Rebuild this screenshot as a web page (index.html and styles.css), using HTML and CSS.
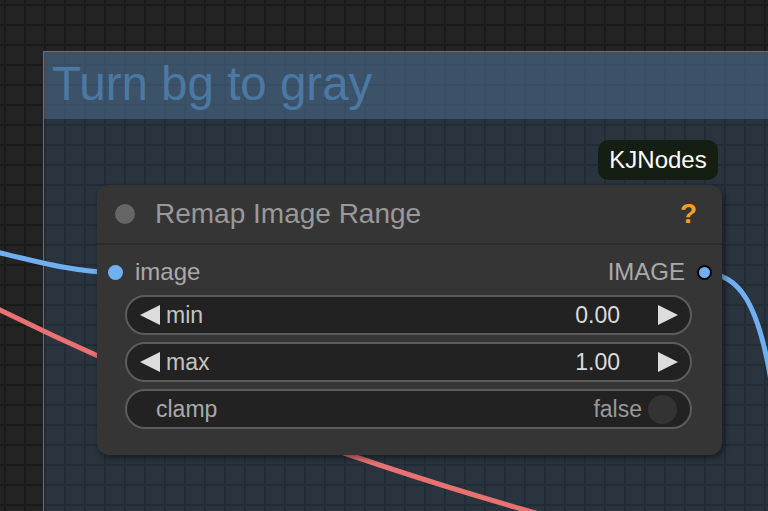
FILE: index.html
```html
<!DOCTYPE html>
<html lang="en">
<head>
  <meta charset="UTF-8">
  <meta name="viewport" content="width=device-width, initial-scale=1.0">
  <title>Remap Image Range</title>
  <link rel="stylesheet" href="styles.css">
</head>
<body>
  <div class="canvas">
    <section class="group">
      <header class="group-title">Turn bg to gray</header>
    </section>

    <svg class="links" width="768" height="511" viewBox="0 0 768 511">
      <path class="link blue" d="M -40 244 C 20 256, 60 271, 116 273" />
      <path class="link red" d="M -30 295 C 110 366, 300 450, 590 528" />
      <path class="link blue" d="M 704 273 C 738 273, 760 300, 774 400" />
    </svg>

    <div class="badge">KJNodes</div>

    <div class="node">
      <div class="node-title">
        <span class="node-dot"></span>
        <span class="node-name">Remap Image Range</span>
        <span class="node-help">?</span>
      </div>
      <div class="node-body">
        <div class="slots">
          <div class="slot"><i class="slot-dot"></i>image</div>
          <div class="slot slot-out">IMAGE<i class="slot-dot"></i></div>
        </div>
        <div class="widget">
          <span class="arrow arrow-left"></span>
          <span class="widget-label">min</span>
          <span class="widget-value">0.00</span>
          <span class="arrow arrow-right"></span>
        </div>
        <div class="widget">
          <span class="arrow arrow-left"></span>
          <span class="widget-label">max</span>
          <span class="widget-value">1.00</span>
          <span class="arrow arrow-right"></span>
        </div>
        <div class="widget widget-toggle">
          <span class="widget-label">clamp</span>
          <span class="widget-value">false</span>
          <span class="knob"></span>
        </div>
      </div>
    </div>
  </div>
</body>
</html>
```

FILE: styles.css
```css
html, body { margin: 0; height: 100%; overflow: hidden; }
body { background: #232323; font-family: "Liberation Sans", Arial, sans-serif; }

/* graph canvas with grid */
.canvas {
  position: relative; width: 768px; height: 511px; overflow: hidden;
  background-color: #232323;
  background-image:
    linear-gradient(to right, #1a1a1a 2px, transparent 2px),
    linear-gradient(to bottom, #1a1a1a 2px, transparent 2px);
  background-size: 20px 20px;
  background-position: 4px 4px;
}

/* group box */
.group {
  position: absolute; left: 43px; top: 51px; width: 760px; height: 500px;
  background: rgba(65,120,170,0.2);
  border-left: 1px solid #4f7699; border-top: 1px solid #4f7699;
}
.group-title {
  height: 67px; padding-left: 8px; box-sizing: border-box;
  background: rgba(81,119,158,0.45);
  color: #4b79a3; font-size: 47.5px; line-height: 64px;
}

/* links */
.links { position: absolute; left: 0; top: 0; }
.link { fill: none; stroke-width: 5; stroke-linecap: round; }
.link.blue { stroke: #70aff0; }
.link.red { stroke: #e87272; }

/* source badge */
.badge {
  position: absolute; left: 598px; top: 140px; width: 120px; height: 40px;
  display: flex; align-items: center; justify-content: center;
  background: #141e13; border-radius: 10px;
  color: #fff; font-size: 24px;
}

/* node */
.node {
  position: absolute; left: 97px; top: 185px; width: 625px; height: 270px;
  background: #353535; border-radius: 12px;
  box-shadow: 2px 3px 6px rgba(0,0,0,0.45);
  display: flex; flex-direction: column;
}
.node-title {
  height: 58px; display: flex; align-items: center;
  padding: 0 25px 0 18px;
  border-bottom: 2px solid #2b2b2b;
}
.node-dot { width: 20px; height: 20px; border-radius: 50%; background: #666; }
.node-name { margin-left: 20px; flex: 1; color: #999; font-size: 28px; }
.node-help { color: #f0a030; font-size: 28px; font-weight: bold; }

.node-body { display: flex; flex-direction: column; gap: 7px; padding-bottom: 25px; }
.slots {
  height: 50px; display: flex; align-items: center; justify-content: space-between;
  padding: 4px 10px 0 11px; box-sizing: border-box; margin-bottom: -7px;
  color: #aaa; font-size: 24px;
}
.slot { display: flex; align-items: center; gap: 12px; }
.slot-dot { width: 15px; height: 15px; border-radius: 50%; background: #70aff0; box-sizing: border-box; }
.slot-out .slot-dot { border: 2px solid #000; }

/* widgets */
.widget {
  height: 40px; margin: 0 30px 0 28px; box-sizing: border-box;
  display: flex; align-items: center;
  padding: 0 12px 0 13px;
  background: #222; border: 2px solid #5c5c5c; border-radius: 20px;
  font-size: 23px;
}
.widget-label { margin-left: 6px; flex: 1; color: #c4c4c4; }
.widget-value { color: #dcdcdc; margin-right: 38px; }
.arrow { width: 0; height: 0; border-top: 10px solid transparent; border-bottom: 10px solid transparent; }
.arrow-left { border-right: 20px solid #ddd; }
.arrow-right { border-left: 20px solid #ddd; }

.widget-toggle { padding: 0 13px 0 29px; }
.widget-toggle .widget-label { margin-left: 0; color: #aaa; }
.widget-toggle .widget-value { color: #999; margin-right: 6px; }
.knob { width: 29px; height: 29px; border-radius: 50%; background: #333; }
```
